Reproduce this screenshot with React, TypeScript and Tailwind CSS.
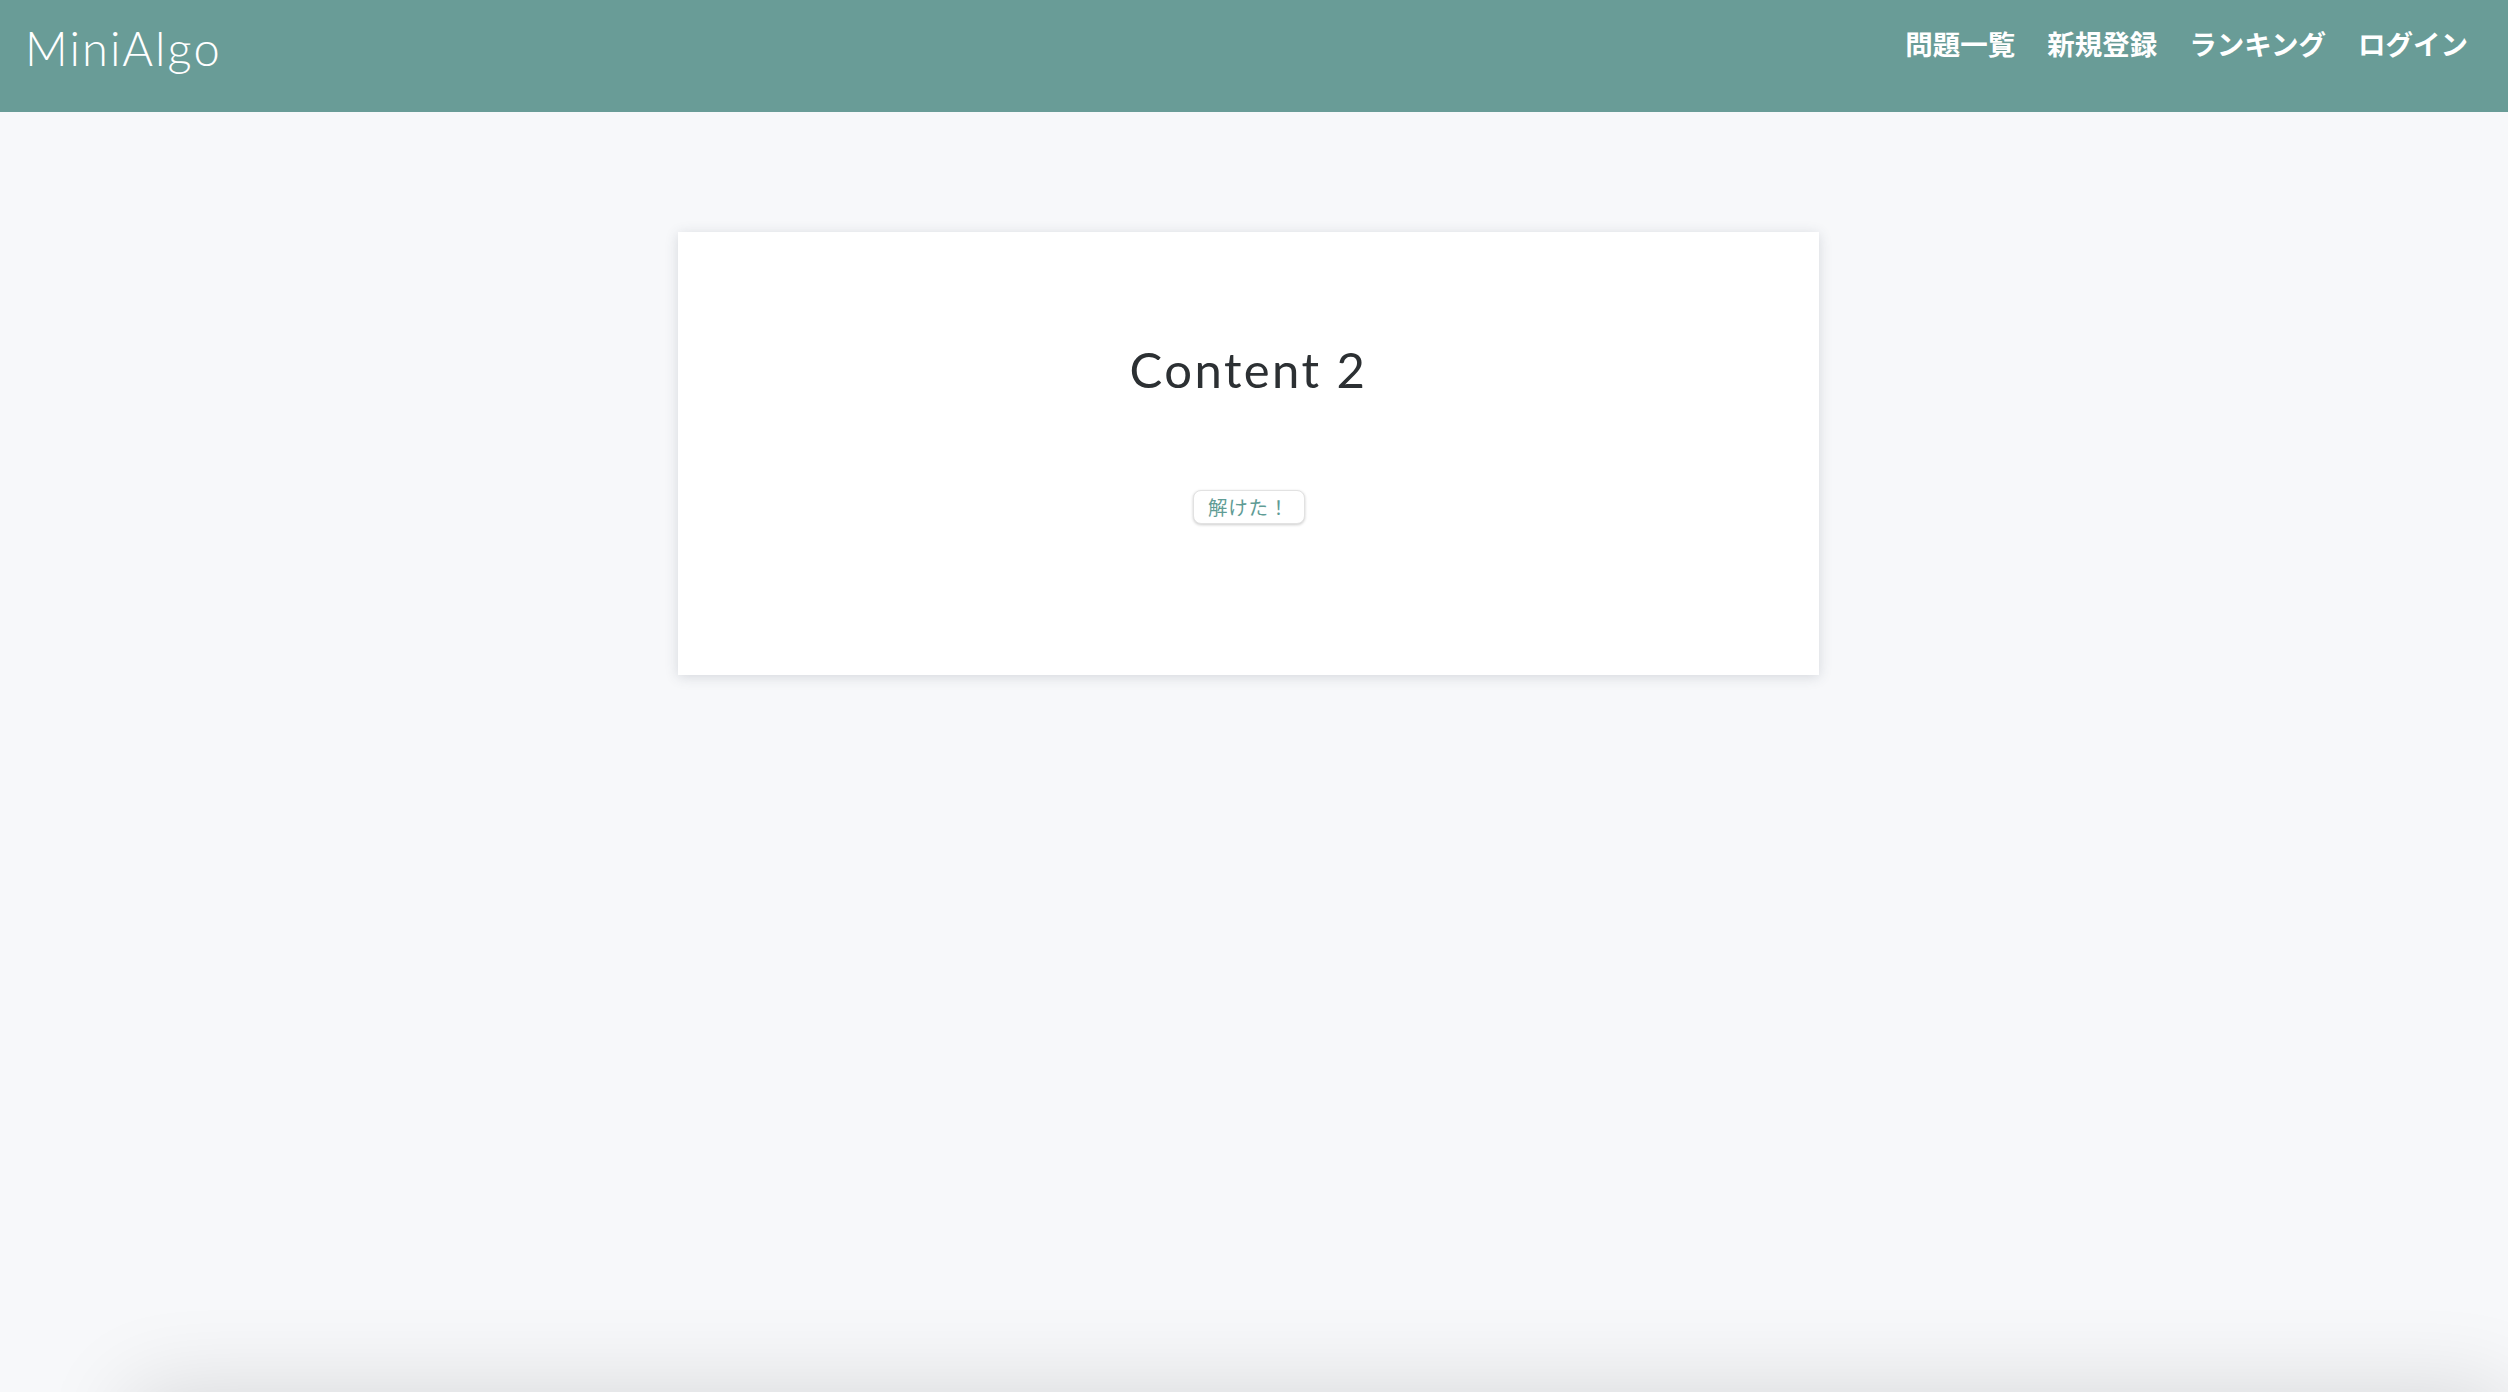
import React from "react";

const navItems = ["問題一覧", "新規登録", "ランキング", "ログイン"];

const Header = () => {
  return (
    <header className="h-[112px] shrink-0 bg-[#699c97] flex items-center justify-between pl-[25px] pr-[40px]">
      <a
        href="#"
        className="text-white text-[47px] font-light tracking-[0.045em] leading-none pb-[16px]"
        style={{ fontFamily: "Lato, 'Noto Sans', sans-serif" }}
      >
        MiniAlgo
      </a>
      <nav className="flex items-center gap-[32px] pb-[24px]">
        {navItems.map((item) => (
          <a
            key={item}
            href="#"
            className="text-white text-[27.5px] font-bold leading-none"
            style={{ fontFamily: "'Noto Sans CJK JP', sans-serif" }}
          >
            {item}
          </a>
        ))}
      </nav>
    </header>
  );
};

export default function App() {
  return (
    <div className="h-[1392px] overflow-hidden flex flex-col bg-[#f7f8fa]">
      <Header />

      {/* Main: problem card */}
      <main className="flex-1 pt-[120px]">
        <div className="w-[1141px] h-[443px] ml-[678px] bg-white shadow-[0_2px_12px_rgba(60,72,88,0.18)] flex flex-col items-center pt-[113px]">
          <h1
            className="text-[49px] leading-none text-[#2c3033] tracking-[0.05em]"
            style={{ fontFamily: "Lato, 'Noto Sans', sans-serif" }}
          >
            Content 2
          </h1>
          <button
            type="button"
            className="mt-[96px] h-[34px] w-[112px] rounded-[8px] border border-[#e2e2e2] bg-white shadow-[0_1px_3px_rgba(0,0,0,0.2)] text-[#5f9c95] text-[19.5px] leading-none tracking-[0.04em]"
            style={{ fontFamily: "'Noto Sans CJK JP', sans-serif" }}
          >
            解けた！
          </button>
        </div>
      </main>

      {/* Footer sits just below the fold; only its shadow shows */}
      <footer className="h-[200px] shrink-0 ml-[130px] translate-y-[200px] bg-[#f7f8fa] shadow-[0_0_90px_rgba(0,0,0,0.14)]" />
    </div>
  );
}
